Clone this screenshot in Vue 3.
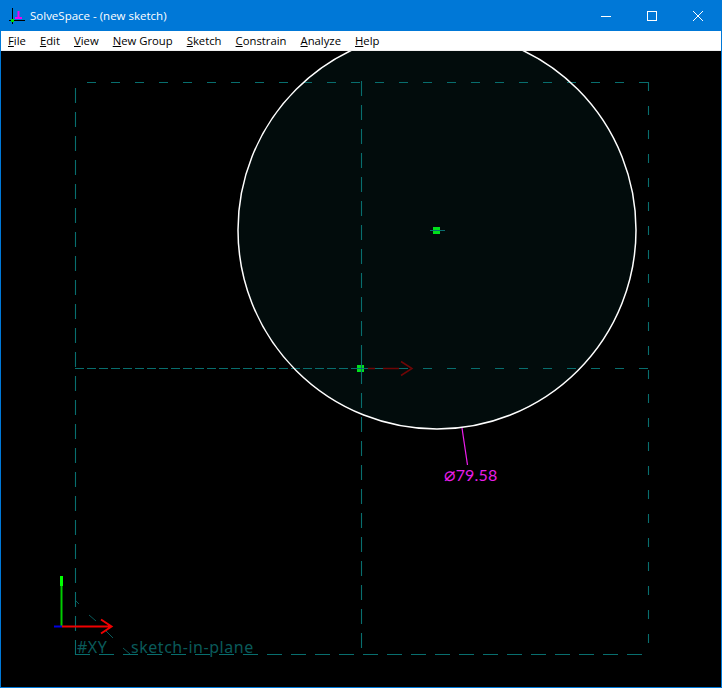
<template>
  <div class="window">
    <div class="titlebar">
      <svg class="app-icon" width="20" height="20" viewBox="8 5 20 20">
        <path d="M12.500 7v16M9 19.500h16" stroke="#000" fill="none" />
        <rect x="11" y="18" width="3" height="3" fill="#00e000" />
        <path d="M18.500 10v6" stroke="#f000f0" stroke-width="2" fill="none" />
        <path d="M15 17h7" stroke="#f000f0" stroke-width="2" fill="none" />
      </svg>
      <span class="title">SolveSpace - (new sketch)</span>
      <div class="controls">
        <button class="ctl">
          <svg width="10" height="10" viewBox="0 0 10 10"><path d="M0 5.500h10" stroke="#fff" fill="none" /></svg>
        </button>
        <button class="ctl">
          <svg width="10" height="10" viewBox="0 0 10 10"><rect x="0.500" y="0.500" width="9" height="9" stroke="#fff" fill="none" /></svg>
        </button>
        <button class="ctl">
          <svg width="10" height="10" viewBox="0 0 10 10"><path d="M0 0l10 10M10 0l-10 10" stroke="#fff" fill="none" /></svg>
        </button>
      </div>
    </div>
    <div class="menubar">
      <span v-for="item in menus" :key="item.rest" class="menu-item"><u>{{ item.key }}</u>{{ item.rest }}</span>
    </div>
    <svg class="canvas" width="720" height="636" viewBox="1 51 720 636">
      <circle cx="437" cy="230" r="199" fill="#020c0c" />
      <g class="plane-lines">
        <!-- dashes: top/right/middle are short, left/bottom/centre are long -->
        <path class="dash-short" d="M87 82.500H648" />
        <path class="dash-short" d="M648.500 82V654" />
        <path class="dash-long" d="M75 654.500H648" />
        <path class="dash-long" d="M75.500 88V656" />
        <path class="dash-long" d="M361.500 81V654" />
        <path class="dash-short" d="M87 368.500H648" />
        <path class="dash-short" d="M75 368.500H361" />
      </g>
      <path d="M368 368.500h7M383 368.500h16" stroke="#6e0606" stroke-width="1.500" fill="none" />
      <path d="M401 361.500l11 7l-11 7" stroke="#6e0606" stroke-width="1.500" fill="none" />
      <circle cx="437" cy="230" r="199" fill="none" stroke="#fff" stroke-width="1.500" />
      <rect x="357" y="365" width="7" height="7" fill="#00e01c" />
      <path d="M351 368.500h17M361.500 360v18" stroke="#086e6e" fill="none" />
      <rect x="433" y="227" width="7" height="7" fill="#00e01c" />
      <path d="M430 230.500h15" stroke="#086e6e" fill="none" />
      <path d="M462 428l5.500 37" stroke="#f01ef0" stroke-width="1.200" fill="none" />
      <text class="dim" x="444" y="481"><tspan class="dia">⌀</tspan>79.58</text>
      <text class="plane" x="77" y="653">#XY</text>
      <text class="plane" x="131" y="653">sketch-in-plane</text>
      <path d="M76 601l3 3M89 615l7 6M106 631l7 7M123 648l7 6" stroke="#0a5a5a" fill="none" />
      <path d="M61.500 576V626" stroke="#0c0" stroke-width="2" fill="none" />
      <path d="M61.500 576V586" stroke="#0f0" stroke-width="3" fill="none" />
      <path d="M54 626.500h8" stroke="#0000e0" stroke-width="2" fill="none" />
      <path d="M62 626.500h49M101 619.500l10.500 7l-10.500 7" stroke="#f00000" stroke-width="2" fill="none" />
    </svg>
  </div>
</template>

<script setup>
const menus = [
  { key: 'F', rest: 'ile' },
  { key: 'E', rest: 'dit' },
  { key: 'V', rest: 'iew' },
  { key: 'N', rest: 'ew Group' },
  { key: 'S', rest: 'ketch' },
  { key: 'C', rest: 'onstrain' },
  { key: 'A', rest: 'nalyze' },
  { key: 'H', rest: 'elp' }
]
</script>

<style>
html,
body {
  margin: 0;
  background: #000;
}
</style>

<style scoped>
.window {
  width: 722px;
  height: 688px;
  box-sizing: border-box;
  border: 1px solid #0078d7;
  border-top: none;
  display: flex;
  flex-direction: column;
  overflow: hidden;
  font-family: "Open Sans", "Liberation Sans", sans-serif;
}

.titlebar {
  height: 31px;
  background: #0078d7;
  display: flex;
  align-items: center;
  color: #fff;
  flex-shrink: 0;
}

.app-icon {
  margin-left: 7px;
  flex-shrink: 0;
}

.title {
  margin-left: 2px;
  font-size: 11.500px;
}

.controls {
  margin-left: auto;
  display: flex;
}

.ctl {
  width: 46px;
  height: 31px;
  background: none;
  border: none;
  padding: 0;
  display: flex;
  align-items: center;
  justify-content: center;
}

.menubar {
  height: 19px;
  background: #fff;
  border-bottom: 1px solid #f0f0f0;
  display: flex;
  align-items: center;
  flex-shrink: 0;
  font-size: 11.300px;
  color: #000;
}

.menu-item {
  padding: 0 7px;
}

.canvas {
  display: block;
  background: #000;
  flex-shrink: 0;
}

.plane-lines path {
  stroke: #086e6e;
  stroke-width: 1.100;
  fill: none;
}

.plane-lines .dash-short {
  stroke-dasharray: 9 15;
}

.plane-lines .dash-long {
  stroke-dasharray: 15 9;
}

.dim {
  font-family: "Lato", sans-serif;
  font-size: 16px;
  letter-spacing: 0.200px;
  fill: #e81ee8;
}

.dia {
  font-family: "DejaVu Sans", sans-serif;
  font-size: 19px;
}

.plane {
  font-family: "Noto Sans", sans-serif;
  font-size: 16px;
  fill: #0a5a5a;
  letter-spacing: 0.530px;
}
</style>
